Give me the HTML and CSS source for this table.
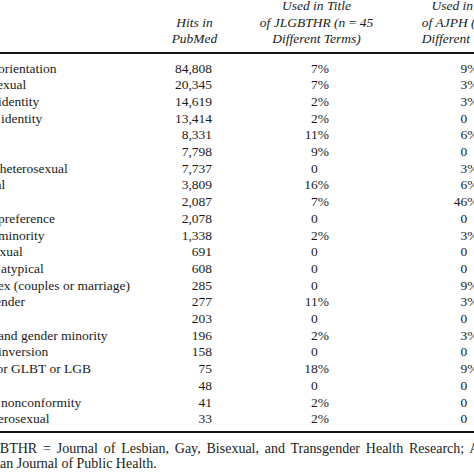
FILE: index.html
```html
<!DOCTYPE html>
<html lang="en">
  <head>
    <meta charset="UTF-8" />
    <meta name="viewport" content="width=device-width, initial-scale=1.0" />
    <title>Terms used for sexual and gender minorities</title>
    <link rel="stylesheet" href="styles.css">
  </head>
  <body>
    <section class="table">
      <!-- header -->
      <div class="row head">
        <div class="term">Term</div>
        <div class="col">Hits in<br />PubMed</div>
        <div class="col">Used in Title<br />of JLGBTHR (<i>n</i> <span class="eq">=</span> 45<br />Different Terms)</div>
        <div class="col">Used in Title<br />of AJPH (<i>n</i> <span class="eq">=</span> 35<br />Different Terms)</div>
      </div>

      <div class="body">
        <div class="row"><div class="term">Sexual orientation</div><div class="hits">84,808</div><div class="pct">7%</div><div class="pct2">9%</div></div>
        <div class="row"><div class="term">Homosexual</div><div class="hits">20,345</div><div class="pct">7%</div><div class="pct2">3%</div></div>
        <div class="row"><div class="term">Sexual identity</div><div class="hits">14,619</div><div class="pct">2%</div><div class="pct2">3%</div></div>
        <div class="row"><div class="term">Gender identity</div><div class="hits">13,414</div><div class="pct">2%</div><div class="pct2">0<span class="pad">%</span></div></div>
        <div class="row"><div class="term">Gay</div><div class="hits">8,331</div><div class="pct">11%</div><div class="pct2">6%</div></div>
        <div class="row"><div class="term">Queer</div><div class="hits">7,798</div><div class="pct">9%</div><div class="pct2">0<span class="pad">%</span></div></div>
        <div class="row"><div class="term">Mostly heterosexual</div><div class="hits">7,737</div><div class="pct">0<span class="pad">%</span></div><div class="pct2">3%</div></div>
        <div class="row"><div class="term">Bisexual</div><div class="hits">3,809</div><div class="pct">16%</div><div class="pct2">6%</div></div>
        <div class="row"><div class="term">LGBT</div><div class="hits">2,087</div><div class="pct">7%</div><div class="pct2">46%</div></div>
        <div class="row"><div class="term">Sexual preference</div><div class="hits">2,078</div><div class="pct">0<span class="pad">%</span></div><div class="pct2">0<span class="pad">%</span></div></div>
        <div class="row"><div class="term">Sexual minority</div><div class="hits">1,338</div><div class="pct">2%</div><div class="pct2">3%</div></div>
        <div class="row"><div class="term">Transsexual</div><div class="hits">691</div><div class="pct">0<span class="pad">%</span></div><div class="pct2">0<span class="pad">%</span></div></div>
        <div class="row"><div class="term">Gender atypical</div><div class="hits">608</div><div class="pct">0<span class="pad">%</span></div><div class="pct2">0<span class="pad">%</span></div></div>
        <div class="row"><div class="term">Same-sex (couples or marriage)</div><div class="hits">285</div><div class="pct">0<span class="pad">%</span></div><div class="pct2">9%</div></div>
        <div class="row"><div class="term">Transgender</div><div class="hits">277</div><div class="pct">11%</div><div class="pct2">3%</div></div>
        <div class="row"><div class="term">Trans</div><div class="hits">203</div><div class="pct">0<span class="pad">%</span></div><div class="pct2">0<span class="pad">%</span></div></div>
        <div class="row"><div class="term">Sexual and gender minority</div><div class="hits">196</div><div class="pct">2%</div><div class="pct2">3%</div></div>
        <div class="row"><div class="term">Sexual inversion</div><div class="hits">158</div><div class="pct">0<span class="pad">%</span></div><div class="pct2">0<span class="pad">%</span></div></div>
        <div class="row"><div class="term">LGBT or GLBT or LGB</div><div class="hits">75</div><div class="pct">18%</div><div class="pct2">9%</div></div>
        <div class="row"><div class="term">MSM</div><div class="hits">48</div><div class="pct">0<span class="pad">%</span></div><div class="pct2">0<span class="pad">%</span></div></div>
        <div class="row"><div class="term">Gender nonconformity</div><div class="hits">41</div><div class="pct">2%</div><div class="pct2">0<span class="pad">%</span></div></div>
        <div class="row"><div class="term">Nonheterosexual</div><div class="hits">33</div><div class="pct">2%</div><div class="pct2">0<span class="pad">%</span></div></div>
      </div>

      <div class="note">
        <div class="note-first"><i>Note.</i> JLGBTHR = Journal of Lesbian, Gay, Bisexual, and Transgender Health Research; AJPH =</div>
        <div class="note-last">American Journal of Public Health.</div>
      </div>
    </section>
  </body>
</html>
```

FILE: styles.css
```css
* {
  margin: 0;
  padding: 0;
  box-sizing: border-box;
}

html,
body {
  background: #fff;
  overflow: hidden;
}

body {
  width: 474px;
  height: 474px;
  font-family: "Liberation Serif", "Times New Roman", serif;
  font-size: 13.5px;
  color: #1c1c1c;
}

/* table is wider than the window, its left part sits off screen */
.table {
  width: 580px;
  margin-left: -42px;
  margin-top: -2px;
}

.row {
  display: grid;
  grid-template-columns: 192px 89px 155px 144px;
  line-height: 16.7px;
  white-space: nowrap;
}

.head {
  align-items: end;
  font-style: italic;
  line-height: 16.5px;
  padding-bottom: 4px;
  border-bottom: 2px solid #151515;
}

.head .col {
  text-align: center;
}

.eq {
  font-style: normal;
}

.body {
  padding-top: 7px;
  padding-bottom: 3px;
  border-bottom: 2px solid #151515;
}

.hits {
  text-align: right;
  padding-right: 27px;
}

.pct {
  text-align: right;
  padding-right: 65px;
}

.pct2 {
  text-align: right;
  padding-right: 59.5px;
}

.pad {
  visibility: hidden;
}

.note {
  padding-top: 8px;
  font-size: 14px;
  line-height: 15px;
  white-space: nowrap;
}

.note-first {
  margin-left: -18px;
  word-spacing: 2.3px;
}
```
